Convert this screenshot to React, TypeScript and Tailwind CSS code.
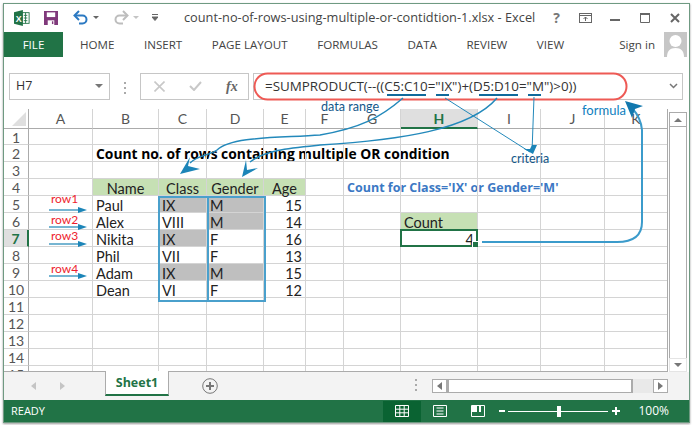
import React from 'react';

const COLS = ['A', 'B', 'C', 'D', 'E', 'F', 'G', 'H', 'I', 'J', 'K'];
const ROWS = [1, 2, 3, 4, 5, 6, 7, 8, 9, 10, 11, 12, 13, 14, 15];

const cells: Record<string, { text?: string; cls?: string }> = {
  B2: { text: 'Count no. of rows containing multiple OR condition', cls: 'font-["Open_Sans"] font-bold text-[13.85px] text-black whitespace-nowrap' },
  B4: { text: 'Name', cls: 'bg-[#c6e0b4] border-[#c6e0b4] justify-center' },
  C4: { text: 'Class', cls: 'bg-[#c6e0b4] border-[#c6e0b4] justify-center' },
  D4: { text: 'Gender', cls: 'bg-[#c6e0b4] border-[#c6e0b4] justify-center' },
  E4: { text: 'Age', cls: 'bg-[#c6e0b4] border-[#c6e0b4] justify-center' },
  B5: { text: 'Paul' }, C5: { text: 'IX', cls: 'bg-[#bfbfbf] border-[#bfbfbf]' }, D5: { text: 'M', cls: 'bg-[#bfbfbf] border-[#bfbfbf]' }, E5: { text: '15', cls: 'justify-end' },
  B6: { text: 'Alex' }, C6: { text: 'VIII' }, D6: { text: 'M', cls: 'bg-[#bfbfbf] border-[#bfbfbf]' }, E6: { text: '14', cls: 'justify-end' },
  B7: { text: 'Nikita' }, C7: { text: 'IX', cls: 'bg-[#bfbfbf] border-[#bfbfbf]' }, D7: { text: 'F' }, E7: { text: '16', cls: 'justify-end' },
  B8: { text: 'Phil' }, C8: { text: 'VII' }, D8: { text: 'F' }, E8: { text: '13', cls: 'justify-end' },
  B9: { text: 'Adam' }, C9: { text: 'IX', cls: 'bg-[#bfbfbf] border-[#bfbfbf]' }, D9: { text: 'M', cls: 'bg-[#bfbfbf] border-[#bfbfbf]' }, E9: { text: '15', cls: 'justify-end' },
  B10: { text: 'Dean' }, C10: { text: 'VI' }, D10: { text: 'F' }, E10: { text: '12', cls: 'justify-end' },
  G4: { text: "Count for Class='IX' or Gender='M'", cls: 'font-["Open_Sans"] font-bold text-[12.5px] text-[#3b78c4] whitespace-nowrap' },
  H6: { text: 'Count', cls: 'bg-[#c6e0b4] border-[#c6e0b4]' },
  H7: { text: '4', cls: 'justify-end' },
};

const TitleBar = () => (
  <div className="flex h-[28px] items-center text-[#444]">
    {/* excel logo */}
    <svg width="16" height="16" viewBox="0 0 18 18" className="ml-[10px] shrink-0">
      <rect x="9" y="3" width="8" height="12" fill="#fff" stroke="#217346" />
      <path d="M11 6h4M11 9h4M11 12h4M13 3v12" stroke="#217346" strokeWidth="1" />
      <path d="M0 2.5 10 0v18L0 15.5z" fill="#217346" />
      <text x="2" y="13" fill="#fff" fontSize="10" fontWeight="700" fontFamily="Liberation Sans, sans-serif">X</text>
    </svg>
    {/* save */}
    <svg width="14" height="14" viewBox="0 0 15 15" className="ml-[14px] shrink-0">
      <path d="M0 0h15v15H0z" fill="#80397b" />
      <path d="M3 1.5h9v5H3z" fill="#fff" />
      <path d="M4 10h7v5H4z" fill="#fff" />
      <path d="M8.5 11h1.5v3H8.5z" fill="#80397b" />
    </svg>
    {/* undo */}
    <svg width="16" height="15" viewBox="0 0 16 15" className="ml-[15px] shrink-0">
      <path d="M2.5 5.5h7a4 4 0 0 1 0 8H6" fill="none" stroke="#2b79c2" strokeWidth="2" />
      <path d="M6 1 1.5 5.5 6 10" fill="none" stroke="#2b79c2" strokeWidth="2" />
    </svg>
    <svg width="6" height="3" viewBox="0 0 6 3" className="ml-[4px] shrink-0"><path d="M0 0h6L3 3z" fill="#666" /></svg>
    {/* redo */}
    <svg width="16" height="15" viewBox="0 0 16 15" className="ml-[14px] shrink-0">
      <path d="M13.5 5.5h-7a4 4 0 0 0 0 8H10" fill="none" stroke="#bdbdbd" strokeWidth="2" />
      <path d="M10 1l4.500 4.500L10 10" fill="none" stroke="#bdbdbd" strokeWidth="2" />
    </svg>
    <svg width="6" height="3" viewBox="0 0 6 3" className="ml-[4px] shrink-0"><path d="M0 0h6L3 3z" fill="#c4c4c4" /></svg>
    <svg width="6" height="7" viewBox="0 0 6 7" className="ml-[13px] shrink-0"><path d="M0 .5h6M0 3h6L3 6.500 0 3z" stroke="#666" fill="#666" /></svg>
    <span className='ml-[26px] font-["Open_Sans"] text-[12.75px] whitespace-nowrap'>count-no-of-rows-using-multiple-or-contidtion-1.xlsx - Excel</span>
    <div className="ml-auto flex items-center pr-[9px]">
      <span className='font-["Open_Sans"] font-bold text-[14px] text-[#777] mr-[19px]'>?</span>
      <svg width="13" height="10" viewBox="0 0 13 10" className="mr-[18px]">
        <rect x=".5" y=".5" width="12" height="9" fill="none" stroke="#666" />
        <path d="M0 2.500h13M6.500 8V4M4.500 6l2-2 2 2" stroke="#666" fill="none" />
      </svg>
      <svg width="10" height="2" viewBox="0 0 10 2" className="mr-[20px] mt-[5px]"><path d="M0 0h10v2H0z" fill="#666" /></svg>
      <svg width="10" height="10" viewBox="0 0 10 10" className="mr-[20px]"><path d="M.5 1.500h9v8h-9z" fill="none" stroke="#666" /><path d="M0 0h10v2H0z" fill="#666" /></svg>
      <svg width="10" height="10" viewBox="0 0 10 10"><path d="M1 1l8 8M9 1 1 9" stroke="#666" strokeWidth="2" /></svg>
    </div>
  </div>
);

const RibbonTabs = () => (
  <div className='flex h-[25px] items-center font-["Open_Sans"] text-[11.6px] text-[#444]'>
    <div className="flex h-full w-[59px] items-center justify-center bg-[#217346] text-white">FILE</div>
    <div className="ml-[17px] flex gap-[29.5px] whitespace-nowrap">
      <span>HOME</span>
      <span>INSERT</span>
      <span>PAGE LAYOUT</span>
      <span>FORMULAS</span>
      <span>DATA</span>
      <span>REVIEW</span>
      <span>VIEW</span>
    </div>
    <span className="ml-auto mr-[9px]">Sign in</span>
    <svg width="23" height="25" viewBox="0 0 23 25" className="mr-[2px]">
      <rect width="23" height="25" fill="#c6c6c6" />
      <circle cx="11.5" cy="9" r="6" fill="#fff" />
      <path d="M3 25c0-6 3-9 8.500-9S20 19 20 25z" fill="#fff" />
    </svg>
  </div>
);

const FormulaBar = () => (
  <div className="flex h-[53px] items-start pt-[16px] pl-[5px]">
    <div className='flex h-[27px] w-[101px] items-center justify-between border border-[#c6c6c6] pl-[6px] pr-[6px] font-["Open_Sans"] text-[12.5px] text-[#333]'>
      H7
      <svg width="8" height="4" viewBox="0 0 8 4"><path d="M0 0h8L4 4z" fill="#777" /></svg>
    </div>
    <div className="mx-[14px] mt-[9px] flex flex-col gap-[3px]">
      <i className="h-[2px] w-[2px] bg-[#aaa]" />
      <i className="h-[2px] w-[2px] bg-[#aaa]" />
      <i className="h-[2px] w-[2px] bg-[#aaa]" />
    </div>
    <div className="flex h-[27px] w-[109px] items-center border border-[#c6c6c6] pl-[13px]">
      <svg width="11" height="11" viewBox="0 0 11 11"><path d="M.5.500l10 10M10.500.500l-10 10" stroke="#c8c8c8" strokeWidth="1.600" /></svg>
      <svg width="13" height="10" viewBox="0 0 13 10" className="ml-[24px]"><path d="M1 5l4 4 7-8" fill="none" stroke="#c8c8c8" strokeWidth="2" /></svg>
      <span className='ml-[24px] font-["Liberation_Serif"] italic text-[14px] font-bold text-[#666]'>fx</span>
    </div>
    <div className='ml-[4px] flex h-[27px] w-[430px] items-center border border-[#c6c6c6] pl-[11px] font-["Open_Sans"] text-[13.4px] text-[#333] whitespace-nowrap'>
      =SUMPRODUCT(--((C5:C10="IX")+(D5:D10="M")&gt;0))
      <svg width="9" height="6" viewBox="0 0 9 6" className="ml-auto mr-[4px]"><path d="M1 1l3.500 3.500L8 1" fill="none" stroke="#777" strokeWidth="1.500" /></svg>
    </div>
  </div>
);

const Sheet = () => (
  <div className='grid h-[263px] grid-cols-[25px_64px_66px_48px_57px_42px_38px_57px_77px_63px_64px_63px] grid-rows-[20px_16px_repeat(14,17px)] overflow-hidden border-r border-b border-[#ababab] font-["Lato"] text-[14.5px] text-[#222] w-[664px]'>
    <div className="relative border-r border-b border-[#ababab]">
      <svg width="14" height="14" viewBox="0 0 14 14" className="absolute right-[2px] bottom-[2px]"><path d="M14 0v14H0z" fill="#dfdfdf" /></svg>
    </div>
    {COLS.map(c => (
      <div
        key={c}
        className={c === 'H'
          ? 'flex items-center justify-center border-b-2 border-r border-[#217346] border-r-[#d4d4d4] bg-[#dfdfdf] text-[14px] font-bold text-[#217346]'
          : 'flex items-center justify-center border-b border-r border-b-[#ababab] border-r-[#d4d4d4] text-[14px] text-[#555]'}
      >
        {c}
      </div>
    ))}
    {ROWS.map(r => (
      <React.Fragment key={r}>
        <div className={r === 7
          ? 'flex items-center justify-center border-r-2 border-b border-r-[#217346] border-b-[#d4d4d4] bg-[#dfdfdf] pt-[1px] text-[14px] font-bold text-[#217346]'
          : 'flex items-center justify-center border-r border-b border-r-[#ababab] border-b-[#d4d4d4] pt-[1px] text-[14px] text-[#555]'}>
          {r}
        </div>
        {COLS.map(c => {
          const cell = cells[c + r];
          const selected = c + r === 'H7';
          return (
            <div
              key={c}
              className={`relative flex items-center border-r border-b border-[#d4d4d4] px-[3px] pt-[2px] whitespace-nowrap ${cell?.cls ?? ''}`}
            >
              {cell?.text}
              {selected && (
                <div className="absolute -top-[1px] -left-[1px] -right-[1px] -bottom-[1px] border-2 border-[#217346]">
                  <i className="absolute -right-[2px] -bottom-[2px] h-[5px] w-[5px] bg-[#217346] outline outline-white" />
                </div>
              )}
            </div>
          );
        })}
      </React.Fragment>
    ))}
  </div>
);

const VScroll = () => (
  <div className="ml-[1px] flex h-[263px] w-[18px] flex-col pt-[3px]">
    <div className="flex h-[15px] items-center justify-center border border-[#ababab] bg-white">
      <svg width="8" height="4" viewBox="0 0 8 4"><path d="M0 4h8L4 0z" fill="#777" /></svg>
    </div>
    <div className="h-[243px] border-x border-[#ababab]" />
    <div className="flex h-[15px] items-center justify-center border border-[#e4e4e4] bg-white">
      <svg width="8" height="4" viewBox="0 0 8 4"><path d="M0 0h8L4 4z" fill="#777" /></svg>
    </div>
  </div>
);

const SheetTabs = () => (
  <div className="flex h-[28px] items-start bg-[#f3f3f3]">
    <svg width="5" height="8" viewBox="0 0 5 8" className="ml-[27px] mt-[10px]"><path d="M5 0v8L0 4z" fill="#c4c4c4" /></svg>
    <svg width="5" height="8" viewBox="0 0 5 8" className="ml-[24px] mt-[10px]"><path d="M0 0v8l5-4z" fill="#c4c4c4" /></svg>
    <div className='ml-[40px] -mt-[1px] flex h-[25px] w-[64px] items-center justify-center border-x border-b-2 border-x-[#ababab] border-b-[#217346] bg-white font-["Open_Sans"] text-[12.5px] font-bold text-[#217346]'>
      Sheet1
    </div>
    <svg width="16" height="16" viewBox="0 0 16 16" className="ml-[33px] mt-[6px]">
      <circle cx="8" cy="8" r="7.300" fill="none" stroke="#777" />
      <path d="M8 4v8M4 8h8" stroke="#777" strokeWidth="2" />
    </svg>
    <div className="ml-[197px] mt-[7px] flex flex-col gap-[3px]">
      <i className="h-[2px] w-[2px] bg-[#aaa]" />
      <i className="h-[2px] w-[2px] bg-[#aaa]" />
      <i className="h-[2px] w-[2px] bg-[#aaa]" />
    </div>
    <div className="ml-[15px] mt-[7px] flex h-[14px] w-[236px] items-stretch">
      <div className="flex w-[15px] items-center justify-center border border-[#ababab] bg-white">
        <svg width="5" height="8" viewBox="0 0 5 8"><path d="M5 0v8L0 4z" fill="#777" /></svg>
      </div>
      <div className="w-[186px] border-y border-x-2 border-[#ababab] bg-white" />
      <div className="w-[20px] bg-[#e9e9e9]" />
      <div className="flex w-[15px] items-center justify-center border border-[#ababab] bg-white">
        <svg width="5" height="8" viewBox="0 0 5 8"><path d="M0 0v8l5-4z" fill="#777" /></svg>
      </div>
    </div>
  </div>
);

const StatusBar = () => (
  <div className='flex h-[22px] items-center bg-[#217346] pl-[7px] font-["Open_Sans"] text-[11px] text-white'>
    READY
    <div className="ml-auto flex h-full items-center">
      <div className="flex h-[21px] w-[38px] items-center justify-center bg-[#0a6332]">
        <svg width="14" height="12" viewBox="0 0 14 12"><path d="M.5.500h13v11H.5zM.5 4.200h13M.5 7.800h13M4.800.5v11M9.200.5v11" fill="none" stroke="#fff" /></svg>
      </div>
      <svg width="14" height="12" viewBox="0 0 14 12" className="ml-[12px]"><path d="M.5.500h13v11H.5z" fill="none" stroke="#fff" /><path d="M3.500 3h7M3.500 6h7M3.500 9h7" stroke="#fff" /></svg>
      <svg width="14" height="12" viewBox="0 0 14 12" className="ml-[24px]"><path d="M.5.500h13v11H.5z" fill="none" stroke="#fff" /><path d="M1 1h5v6H1zM8 1h2v6H8z" fill="#fff" /></svg>
      <svg width="6" height="2" viewBox="0 0 6 2" className="ml-[14px]"><path d="M0 0h6v2H0z" fill="#fff" /></svg>
      <div className="relative ml-[3px] h-[1px] w-[100px] bg-white">
        <i className="absolute top-[-5px] left-[49px] h-[11px] w-[4px] bg-white" />
      </div>
      <svg width="8" height="8" viewBox="0 0 8 8" className="ml-[4px]"><path d="M3 0h2v8H3zM0 3h8v2H0z" fill="#fff" /></svg>
      <span className="ml-[18px] mr-[20px] text-[12px]">100%</span>
    </div>
  </div>
);

// callouts drawn over the sheet, page coordinates
const Callouts = () => (
  <svg width="693" height="425" viewBox="0 0 693 425" className="absolute top-0 left-0 pointer-events-none">
    <rect x="254.500" y="73.500" width="372" height="26" rx="13" fill="none" stroke="#ee5a55" strokeWidth="2" />
    <g stroke="#0f6a9c" strokeWidth="2">
      <path d="M387 95h39M436 95h13M479 95h39M528 95h13" />
    </g>
    <g fill="none" stroke="#2389bb">
      <path d="M403 98C380 118 360 128 320 135C280 138 232 136 217 150C208 156 198 155 190 163" strokeWidth="1.500" />
      <path d="M497 98C470 130 400 140 320 145C290 148 265 150 250 162" strokeWidth="1.500" />
      <path d="M445 98 530 152M534 97 532 152" strokeWidth="1" />
    </g>
    <polygon points="180,174 200,169 188,166 190,157" fill="#1c85b8" />
    <polygon points="242,177 258,168 247,170 246,160" fill="#1c85b8" />
    <polygon points="533,154 524,149 530,149 532,145 537,145" fill="#1c85b8" />
    <path d="M482 242H617Q642 242 642 222V130Q641 118 632 108" fill="none" stroke="#3b9bcb" strokeWidth="2" />
    <polygon points="625,101 643,106 635,109 632,118" fill="#1278ae" />
    <g stroke="#4a9dc4" strokeWidth="1.500">
      <path d="M49 210h32M49 227h32M49 244h32M49 276h32" />
    </g>
    <polygon points="87,210 78,207 78,213" fill="#1c85b8" />
    <polygon points="87,227 78,224 78,230" fill="#1c85b8" />
    <polygon points="87,244 78,241 78,247" fill="#1c85b8" />
    <polygon points="87,276 78,273 78,279" fill="#1c85b8" />
  </svg>
);

const Label = ({ className, children }: { className: string; children: React.ReactNode }) => (
  <span className={`absolute font-["Lato"] whitespace-nowrap leading-none ${className}`}>{children}</span>
);

export default function App() {
  return (
    <div className="relative h-[425px] w-[693px] overflow-hidden bg-white p-[3px] pb-[2px]">
      <div className="flex h-full flex-col border border-[#6f9a82] bg-white shadow-[0_1px_2px_rgba(0,0,0,0.4)]">
        <TitleBar />
        <RibbonTabs />
        <FormulaBar />
        <div className="flex">
          <Sheet />
          <VScroll />
        </div>
        <SheetTabs />
        <StatusBar />
      </div>

      {/* boxes round the two columns */}
      <div className="absolute top-[196px] left-[158px] h-[106px] w-[51px] border-2 border-[#4aa0cc]" />
      <div className="absolute top-[196px] left-[207px] h-[106px] w-[59px] border-2 border-[#4aa0cc]" />

      <Callouts />

      <Label className="top-[101px] left-[321px] text-[12.6px] text-[#14588a]">data range</Label>
      <Label className="top-[104px] left-[582px] text-[13px] text-[#0e80c0]">formula</Label>
      <Label className="top-[153px] left-[511px] text-[12.5px] text-[#14588a]">criteria</Label>
      <Label className="top-[193px] left-[51px] text-[12px] text-[#ee1c2e]">row1</Label>
      <Label className="top-[214px] left-[51px] text-[12px] text-[#ee1c2e]">row2</Label>
      <Label className="top-[230px] left-[51px] text-[12px] text-[#ee1c2e]">row3</Label>
      <Label className="top-[263px] left-[51px] text-[12px] text-[#ee1c2e]">row4</Label>
    </div>
  );
}
